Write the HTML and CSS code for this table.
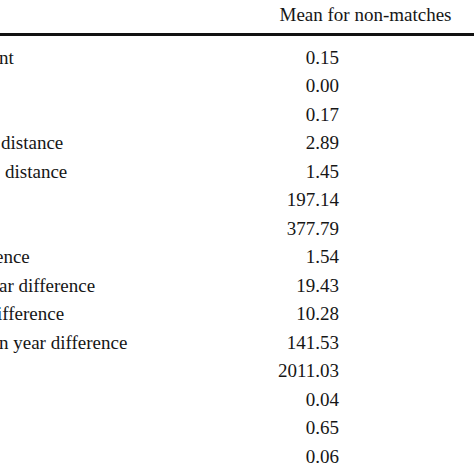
FILE: index.html
```html
<!DOCTYPE html>
<html>
<head>
<meta charset="utf-8">
<link rel="stylesheet" href="styles.css">
</head>
<body>
<div class="table">
  <div class="head">
    <div class="label"></div>
    <div class="hcell">Mean for non-matches</div>
  </div>
  <div class="body">
    <div class="row"><div class="label i1">nt</div><div class="val">0.15</div></div>
    <div class="row"><div class="label"></div><div class="val">0.00</div></div>
    <div class="row"><div class="label"></div><div class="val">0.17</div></div>
    <div class="row"><div class="label p1">distance</div><div class="val">2.89</div></div>
    <div class="row"><div class="label p5">distance</div><div class="val">1.45</div></div>
    <div class="row"><div class="label"></div><div class="val">197.14</div></div>
    <div class="row"><div class="label"></div><div class="val">377.79</div></div>
    <div class="row"><div class="label i5">ence</div><div class="val">1.54</div></div>
    <div class="row"><div class="label i1">ar difference</div><div class="val">19.43</div></div>
    <div class="row"><div class="label i3">ifference</div><div class="val">10.28</div></div>
    <div class="row"><div class="label i1">n year difference</div><div class="val">141.53</div></div>
    <div class="row"><div class="label"></div><div class="val">2011.03</div></div>
    <div class="row"><div class="label"></div><div class="val">0.04</div></div>
    <div class="row"><div class="label"></div><div class="val">0.65</div></div>
    <div class="row"><div class="label"></div><div class="val">0.06</div></div>
  </div>
</div>
</body>
</html>
```
FILE: styles.css
```css
html, body {
  margin: 0;
  padding: 0;
  background: #ffffff;
  overflow: hidden;
}
body {
  width: 474px;
  height: 474px;
  font-family: "Liberation Serif", "Times New Roman", serif;
  font-size: 19px;
  color: #161616;
}
.table {
  display: flex;
  flex-direction: column;
}
.head {
  display: flex;
  height: 36px;
  box-sizing: border-box;
  padding-top: 4px;
  line-height: 22px;
  border-bottom: 3px solid #111111;
}
.head .label {
  flex: 1;
}
.hcell {
  width: 217px;
  text-align: center;
}
.body {
  display: flex;
  flex-direction: column;
  padding-top: 7.75px;
}
.row {
  display: flex;
  height: 28.5px;
  line-height: 28.5px;
}
.label {
  flex: 1;
  white-space: nowrap;
}
.val {
  width: 217px;
  box-sizing: border-box;
  padding-right: 135px;
  text-align: right;
}
.i1 { text-indent: -1px; }
.i3 { text-indent: -3px; }
.i5 { text-indent: -5px; }
.p1 { padding-left: 1px; }
.p5 { padding-left: 5px; }
```
